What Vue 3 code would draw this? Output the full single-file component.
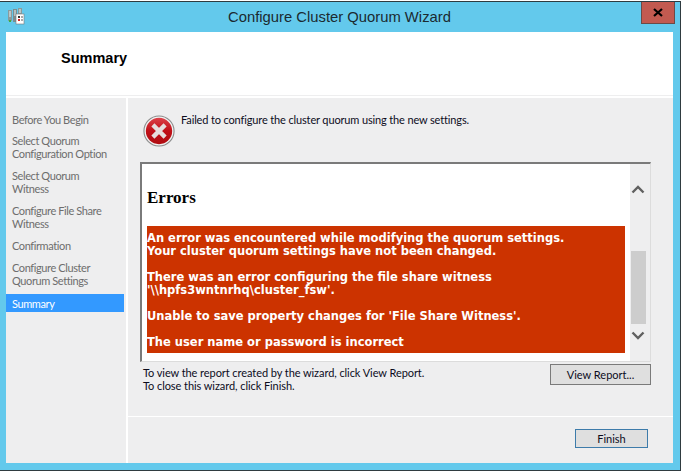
<script setup>
const steps = [
  { label: 'Before You Begin' },
  { label: 'Select Quorum\nConfiguration Option' },
  { label: 'Select Quorum\nWitness' },
  { label: 'Configure File Share\nWitness' },
  { label: 'Confirmation' },
  { label: 'Configure Cluster\nQuorum Settings' },
  { label: 'Summary', active: true }
]
</script>

<template>
  <div class="window">
    <div class="titlebar">
      <svg class="app-icon" width="17" height="17" viewBox="0 0 17 17">
        <rect x="0" y="2" width="4" height="11" fill="#8a9a9c" />
        <rect x="5" y="1" width="4" height="13" fill="#7d8d90" />
        <rect x="10" y="0" width="4" height="6" fill="#8a9a9c" />
        <path d="M1 4h2M1 6h2M1 8h2M6 3h2M6 5h2M6 7h2M11 2h2M11 4h2" stroke="#e8f2f4" stroke-width="1" />
        <rect x="1" y="12" width="2" height="2" fill="#3fae3f" />
        <rect x="8" y="6" width="8" height="10" fill="#fff" stroke="#777" stroke-width="0.6" />
        <rect x="10" y="8" width="2" height="2" fill="#333" />
        <rect x="10" y="11" width="2" height="2" fill="#d22" />
        <path d="M13 9h2M13 12h2" stroke="#555" stroke-width="1" />
      </svg>
      <span class="title">Configure Cluster Quorum Wizard</span>
      <div class="close">
        <svg width="10" height="9" viewBox="0 0 10 9">
          <path d="M1 1l8 7M9 1l-8 7" stroke="#000" stroke-width="2.2" fill="none" />
        </svg>
      </div>
    </div>

    <div class="client">
      <div class="header"><h1>Summary</h1></div>
      <div class="panels">
        <nav class="sidebar">
          <div
            v-for="step in steps"
            :key="step.label"
            class="step"
            :class="{ active: step.active }"
          >{{ step.label }}</div>
        </nav>

        <div class="main">
          <div class="content">
            <div class="status">
              <svg class="err-icon" width="32" height="32" viewBox="0 0 34 34">
                <defs>
                  <linearGradient id="redFill" x1="0" y1="0" x2="0" y2="1">
                    <stop offset="0" stop-color="#dc4048" />
                    <stop offset="0.5" stop-color="#c01018" />
                    <stop offset="1" stop-color="#b00c12" />
                  </linearGradient>
                </defs>
                <circle cx="17" cy="17" r="16" fill="#f2f2f2" stroke="#8d8d8d" stroke-width="1.2" />
                <circle cx="17" cy="17" r="14" fill="url(#redFill)" />
                <path d="M10.500 10.500l13 13M23.500 10.500l-13 13" stroke="#e6dede" stroke-width="4.600" fill="none" />
              </svg>
              <span>Failed to configure the cluster quorum using the new settings.</span>
            </div>

            <div class="report">
              <div class="report-page">
                <h2>Errors</h2>
                <div class="errors">
                  <p>An error was encountered while modifying the quorum settings.<br>Your cluster quorum settings have not been changed.</p>
                  <p>There was an error configuring the file share witness<br>'\\hpfs3wntnrhq\cluster_fsw'.</p>
                  <p>Unable to save property changes for 'File Share Witness'.</p>
                  <p>The user name or password is incorrect</p>
                </div>
              </div>
              <div class="scrollbar">
                <svg width="14" height="9" viewBox="0 0 14 9">
                  <path d="M1.5 7.5L7 2l5.500 5.500" stroke="#606060" stroke-width="2.4" fill="none" />
                </svg>
                <div class="thumb"></div>
                <svg width="14" height="9" viewBox="0 0 14 9">
                  <path d="M1.500 1.500L7 7l5.500-5.500" stroke="#606060" stroke-width="2.4" fill="none" />
                </svg>
              </div>
            </div>

            <div class="below">
              <div class="hint">To view the report created by the wizard, click View Report.<br>To close this wizard, click Finish.</div>
              <button class="btn view">View Report...</button>
            </div>
          </div>
          <div class="footer">
            <button class="btn finish">Finish</button>
          </div>
        </div>
      </div>
    </div>
  </div>
</template>

<style>
html, body {
  margin: 0;
  background: #fff;
}
</style>

<style scoped>
.window {
  box-sizing: border-box;
  width: 681px;
  height: 470px;
  margin-top: 1px;
  background: #63c9ec;
  border-top: 1px solid #2f3b40;
  border-right: 1px solid #2f3b40;
  border-bottom: 1px solid #2f3b40;
  padding: 0 7px 7px 6px;
  display: flex;
  flex-direction: column;
  font-family: "Liberation Sans", Arial, sans-serif;
}

.titlebar {
  position: relative;
  height: 30px;
  flex: none;
  display: flex;
  align-items: center;
  justify-content: center;
}

.app-icon {
  position: absolute;
  left: 2px;
  top: 6px;
}

.title {
  font-size: 14.8px;
  color: #1b2a30;
  margin-top: -1px;
}

.close {
  position: absolute;
  top: 0;
  right: -2px;
  width: 32px;
  height: 21px;
  background: #c25a50;
  border: 1px solid #6c4a46;
  border-top: none;
  display: flex;
  align-items: center;
  justify-content: center;
}

.client {
  flex: 1;
  display: flex;
  flex-direction: column;
  background: #fff;
  min-height: 0;
}

.header {
  height: 63px;
  flex: none;
  border-bottom: 1px solid #eeeeef;
  box-sizing: content-box;
  margin-bottom: 2px;
}

.header h1 {
  margin: 18px 0 0 55px;
  font-size: 14.5px;
  line-height: 16px;
  font-weight: bold;
  color: #000;
}

.panels {
  flex: 1;
  display: flex;
  gap: 2px;
  min-height: 0;
}

.sidebar {
  width: 120px;
  flex: none;
  background: #eeeeef;
  padding-top: 13px;
  box-sizing: border-box;
}

.step {
  white-space: pre-line;
  font-family: Lato, "Liberation Sans", sans-serif;
  font-size: 11px;
  letter-spacing: -0.4px;
  line-height: 13px;
  color: #6d6d6d;
  padding: 2px 0 2px 6px;
  margin-bottom: 5px;
  width: 118px;
  box-sizing: border-box;
}

.step:first-child {
  margin-bottom: 4px;
}

.step.active {
  background: #3399ff;
  color: #fff;
  padding: 3px 0 2px 6px;
  height: 18px;
}

.main {
  flex: 1;
  display: flex;
  flex-direction: column;
  background: #eeeeef;
  min-width: 0;
}

.content {
  height: 319px;
  flex: none;
  padding: 14px 22px 0 12px;
  box-sizing: border-box;
  border-bottom: 1px solid #fff;
}

.status {
  height: 50px;
  display: flex;
  align-items: flex-start;
  font-family: Lato, "Liberation Sans", sans-serif;
  font-size: 11px;
  letter-spacing: -0.14px;
  color: #0c0c1c;
  padding-left: 3px;
}

.status span {
  margin: 1px 0 0 6px;
  line-height: 13px;
}

.err-icon {
  margin-top: 3px;
}

.report {
  box-sizing: border-box;
  height: 200px;
  width: 511px;
  display: flex;
  border-top: 2px solid #7a7a7a;
  border-left: 2px solid #7a7a7a;
  border-right: 1px solid #dcdcdc;
  border-bottom: 1px solid #dcdcdc;
}

.report-page {
  flex: none;
  width: 488px;
  height: 100%;
  background: #fff;
  padding: 0 5px;
  box-sizing: border-box;
  overflow: hidden;
}

.report-page h2 {
  margin: 24px 0 18px;
  font-family: "Liberation Serif", "Times New Roman", serif;
  font-size: 17px;
  line-height: 20px;
  font-weight: bold;
  color: #000;
}

.errors {
  background: #cc3300;
  color: #fff;
  height: 127px;
  padding-top: 6px;
  box-sizing: border-box;
  font-family: "DejaVu Sans", Verdana, sans-serif;
  font-size: 11.5px;
  font-weight: bold;
  line-height: 13px;
  overflow: hidden;
}

.errors p {
  margin: 0 0 13px;
}

.scrollbar {
  flex: 1;
  display: flex;
  flex-direction: column;
  align-items: center;
  padding-right: 4px;
  box-sizing: border-box;
}

.scrollbar svg:first-child {
  margin-top: 21px;
}

.thumb {
  width: 15px;
  height: 73px;
  background: #cdcdcd;
  margin: 57px 0 7px;
  flex: none;
}

.below {
  display: flex;
  justify-content: space-between;
  align-items: flex-start;
  margin-top: 2px;
}

.hint {
  font-family: Lato, "Liberation Sans", sans-serif;
  font-size: 11px;
  letter-spacing: -0.07px;
  line-height: 13px;
  color: #0c0c1c;
  padding-left: 3px;
  margin-top: 2px;
}

.btn {
  box-sizing: border-box;
  font-family: Lato, "Liberation Sans", sans-serif;
  font-size: 11px;
  color: #0c0c1c;
  background: #dfdfdf;
  padding: 0;
}

.view {
  width: 101px;
  height: 21px;
  border: 1px solid #7a7a7a;
}

.footer {
  flex: 1;
  display: flex;
  justify-content: flex-end;
  align-items: flex-start;
  padding: 12px 25px 0 0;
}

.finish {
  width: 73px;
  height: 19px;
  border: 1px solid #3d7baa;
}
</style>
